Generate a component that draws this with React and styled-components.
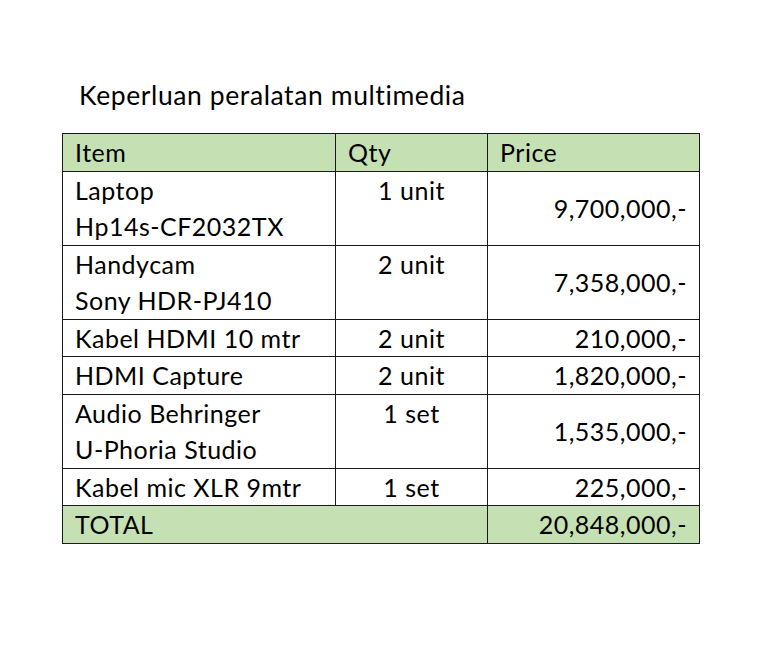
import React from 'react';
import styled, { createGlobalStyle } from 'styled-components';

const GlobalStyle = createGlobalStyle`
  html, body {
    margin: 0;
    padding: 0;
    background: #ffffff;
  }
  body {
    font-family: Lato, "Open Sans", sans-serif;
    color: #000000;
  }
`;

const Page = styled.div`
  width: 768px;
  height: 666px;
  padding: 80px 0 0 62px;
  box-sizing: border-box;
`;

const Title = styled.h1`
  margin: 0 0 22px 17px;
  font-weight: 400;
  font-size: 26.5px;
  letter-spacing: 0.6px;
  line-height: 31px;
`;

const Table = styled.table`
  border-collapse: collapse;
  table-layout: fixed;
  width: 637px;
  font-size: 25px;
  letter-spacing: 0.5px;
  line-height: 36.5px;
`;

const Cell = styled.td`
  border: 1px solid #1a1a1a;
  padding: 0 12px;
  vertical-align: ${props => props.$valign || 'top'};
  text-align: ${props => props.$align || 'left'};
  background: ${props => (props.$green ? '#c5e0b3' : '#ffffff')};
  white-space: nowrap;
`;

const Line = styled.div``;

const items = [
  { name: ['Laptop', 'Hp14s-CF2032TX'], qty: '1 unit', price: '9,700,000,-' },
  { name: ['Handycam', 'Sony HDR-PJ410'], qty: '2 unit', price: '7,358,000,-' },
  { name: ['Kabel HDMI 10 mtr'], qty: '2 unit', price: '210,000,-' },
  { name: ['HDMI Capture'], qty: '2 unit', price: '1,820,000,-' },
  { name: ['Audio Behringer', 'U-Phoria Studio'], qty: '1 set', price: '1,535,000,-' },
  { name: ['Kabel mic XLR 9mtr'], qty: '1 set', price: '225,000,-' },
];

export default function App() {
  return (
    <Page>
      <GlobalStyle />
      <Title>Keperluan peralatan multimedia</Title>
      <Table>
        <colgroup>
          <col style={{ width: 273 }} />
          <col style={{ width: 152 }} />
          <col style={{ width: 212 }} />
        </colgroup>
        <tbody>
          <tr>
            <Cell $green>Item</Cell>
            <Cell $green>Qty</Cell>
            <Cell $green>Price</Cell>
          </tr>
          {items.map(item => (
            <tr key={item.price}>
              <Cell>
                {item.name.map(n => (
                  <Line key={n}>{n}</Line>
                ))}
              </Cell>
              <Cell $align="center">{item.qty}</Cell>
              <Cell $align="right" $valign="middle">{item.price}</Cell>
            </tr>
          ))}
          <tr>
            <Cell $green colSpan={2}>TOTAL</Cell>
            <Cell $green $align="right">20,848,000,-</Cell>
          </tr>
        </tbody>
      </Table>
    </Page>
  );
}
